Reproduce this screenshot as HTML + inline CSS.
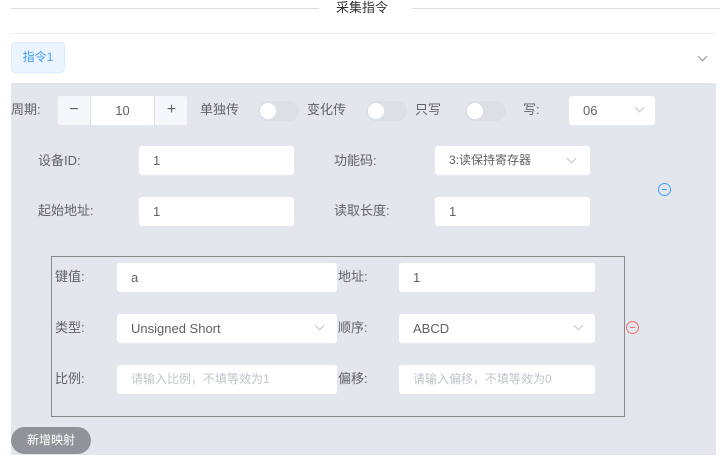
<!DOCTYPE html>
<html><head><meta charset="utf-8"><style>
*{box-sizing:border-box;margin:0;padding:0}
body{width:727px;height:468px;background:#fff;font-family:"Liberation Sans","Noto Sans CJK SC",sans-serif;font-size:13px;color:#606266;position:relative;overflow:hidden}
.a{position:absolute}
.line{position:absolute;height:1px;background:#dcdfe6}
.inp{position:absolute;background:#fff;border:1px solid #e4e7ed;border-radius:4px;height:31px;line-height:29px;padding-left:14px;color:#606266}
.ph{color:#c0c4cc}
.lbl{position:absolute;line-height:20px;color:#606266}
.chev{position:absolute;width:7px;height:7px;border-right:1px solid #c0c4cc;border-bottom:1px solid #c0c4cc;transform:rotate(45deg)}
.sw{position:absolute;width:41px;height:20px;border-radius:10px;background:#dcdfe6}
.sw::after{content:"";position:absolute;left:2px;top:2px;width:16px;height:16px;border-radius:50%;background:#fff}
.circ{position:absolute;width:13px;height:13px;border-radius:50%;border:1px solid}
.circ::after{content:"";position:absolute;left:3px;top:5px;width:5px;height:1px;background:currentColor}
</style></head><body>
<div class="line" style="left:11px;top:8px;width:308px"></div>
<div class="line" style="left:412px;top:8px;width:308px"></div>
<div class="a" style="left:336px;top:0;line-height:16px;color:#303133">采集指令</div>
<div class="line" style="left:11px;top:33px;width:705px;background:#ebeef5"></div>
<div class="a" style="left:11px;top:42px;width:54px;height:31px;background:#ecf5ff;border:1px solid #d9ecff;border-radius:4px;color:#409eff;font-size:12px;line-height:29px;text-align:center">指令1</div>
<div class="chev" style="left:699px;top:53px;border-color:#909399"></div>

<div class="a" style="left:11px;top:83px;width:705px;height:372px;background:#e4e6ee"></div>

<div class="lbl" style="left:11px;top:100px">周期:</div>
<div class="a" style="left:57px;top:95px;width:131px;height:31px;border:1px solid #e4e7ed;border-radius:4px;background:#fff;overflow:hidden">
 <div class="a" style="left:0;top:0;width:33px;height:29px;background:#f5f7fa;border-right:1px solid #dcdfe6;text-align:center;line-height:28px;font-size:16px">−</div>
 <div class="a" style="left:33px;top:0;width:63px;height:29px;text-align:center;line-height:29px">10</div>
 <div class="a" style="left:96px;top:0;width:34px;height:29px;background:#f5f7fa;border-left:1px solid #dcdfe6;text-align:center;line-height:28px;font-size:16px">+</div>
</div>
<div class="lbl" style="left:200px;top:100px">单独传</div>
<div class="sw" style="left:258px;top:101px"></div>
<div class="lbl" style="left:307px;top:100px">变化传</div>
<div class="sw" style="left:366px;top:101px"></div>
<div class="lbl" style="left:415px;top:100px">只写</div>
<div class="sw" style="left:465px;top:101px"></div>
<div class="lbl" style="left:523px;top:100px">写:</div>
<div class="inp" style="left:568px;top:95px;width:88px">06</div>
<div class="chev" style="left:636px;top:104px"></div>

<div class="lbl" style="left:38px;top:151px">设备ID:</div>
<div class="inp" style="left:138px;top:145px;width:157px">1</div>
<div class="lbl" style="left:334px;top:151px">功能码:</div>
<div class="inp" style="left:434px;top:145px;width:157px;font-size:12px">3:读保持寄存器</div>
<div class="chev" style="left:568px;top:155px"></div>

<div class="lbl" style="left:38px;top:201px">起始地址:</div>
<div class="inp" style="left:138px;top:196px;width:157px">1</div>
<div class="lbl" style="left:334px;top:201px">读取长度:</div>
<div class="inp" style="left:434px;top:196px;width:157px">1</div>
<div class="circ" style="left:658px;top:183px;color:#409eff;border-color:#409eff"></div>

<div class="a" style="left:51px;top:256px;width:574px;height:161px;border:1px solid #888"></div>
<div class="lbl" style="left:55px;top:267px">键值:</div>
<div class="inp" style="left:116px;top:262px;width:222px">a</div>
<div class="lbl" style="left:338px;top:267px">地址:</div>
<div class="inp" style="left:398px;top:262px;width:198px">1</div>
<div class="lbl" style="left:55px;top:318px">类型:</div>
<div class="inp" style="left:116px;top:313px;width:222px">Unsigned Short</div>
<div class="chev" style="left:316px;top:322px"></div>
<div class="lbl" style="left:338px;top:318px">顺序:</div>
<div class="inp" style="left:398px;top:313px;width:198px">ABCD</div>
<div class="chev" style="left:575px;top:322px"></div>
<div class="lbl" style="left:55px;top:369px">比例:</div>
<div class="inp ph" style="left:116px;top:364px;width:222px;font-size:12px">请输入比例，不填等效为1</div>
<div class="lbl" style="left:338px;top:369px">偏移:</div>
<div class="inp ph" style="left:398px;top:364px;width:198px;font-size:12px">请输入偏移，不填等效为0</div>
<div class="circ" style="left:626px;top:321px;color:#f56c6c;border-color:#f56c6c"></div>

<div class="a" style="left:11px;top:427px;width:80px;height:27px;border-radius:14px;background:#909399;color:#fff;font-size:12px;line-height:27px;text-align:center">新增映射</div>
</body></html>
